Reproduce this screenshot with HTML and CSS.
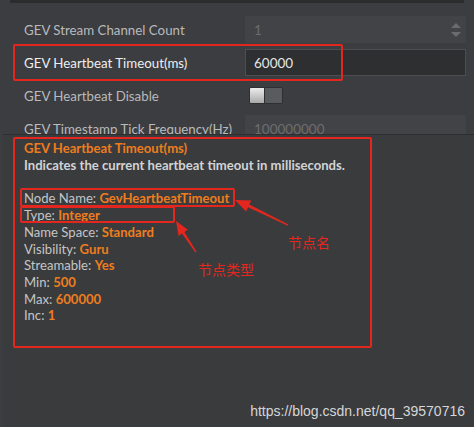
FILE: index.html
```html
<!DOCTYPE html>
<html>
<head>
<meta charset="utf-8">
<link rel="stylesheet" href="styles.css">
</head>
<body>
<div class="page">
  <div class="topbar"></div>
  <div class="props">
    <div class="row">
      <span class="label">GEV Stream Channel Count</span>
      <div class="field disabled"><span class="val">1</span>
        <span class="spin"><span class="up"></span><span class="down"></span></span>
      </div>
    </div>
    <div class="row">
      <span class="label strong">GEV Heartbeat Timeout(ms)</span>
      <div class="field active"><span class="val">60000</span></div>
    </div>
    <div class="row">
      <span class="label">GEV Heartbeat Disable</span>
      <div class="toggle"><span class="knob"></span><span class="track"></span></div>
    </div>
    <div class="row">
      <span class="label">GEV Timestamp Tick Frequency(Hz)</span>
      <div class="field disabled"><span class="val">100000000</span></div>
    </div>
  </div>

  <div class="mark mark-row"></div>

  <div class="tooltip">
    <div class="tip-title">GEV Heartbeat Timeout(ms)</div>
    <div class="tip-desc">Indicates the current heartbeat timeout in milliseconds.</div>
    <div class="tip-gap"></div>
    <div class="kv">Node Name: <b>GevHeartbeatTimeout</b></div>
    <div class="kv">Type: <b>Integer</b></div>
    <div class="kv">Name Space: <b>Standard</b></div>
    <div class="kv">Visibility: <b>Guru</b></div>
    <div class="kv">Streamable: <b>Yes</b></div>
    <div class="kv">Min: <b>500</b></div>
    <div class="kv">Max: <b>600000</b></div>
    <div class="kv">Inc: <b>1</b></div>

    <div class="mark mark-tip"></div>
    <div class="mark mark-node"></div>
    <div class="mark mark-type"></div>
    <span class="note note-name">节点名</span>
    <span class="note note-type">节点类型</span>
    <div class="watermark">https://blog.csdn.net/qq_39570716</div>
  </div>

  <svg class="arrows" width="474" height="427" viewBox="0 0 474 427">
    <polygon fill="#e3271f" points="235,200 251.2,200.6 249.3,204.6 288.4,224.4 287.8,225.8 248.1,207.3 246.1,211.4"/>
    <polygon fill="#e3271f" points="176,221 187.8,229.8 184.4,232 196.5,251.6 195.5,252.4 181.9,233.6 178.6,235.9"/>
  </svg>
</div>
</body>
</html>
```

FILE: styles.css
```css
html, body {
  margin: 0;
  padding: 0;
  background: #3c3d40;
}
.page {
  position: relative;
  width: 474px;
  height: 427px;
  overflow: hidden;
  background: #3c3d40;
  font-family: Lato, "Noto Sans", sans-serif;
}
.topbar {
  height: 3px;
  margin: 0 10px;
  background: #2b2c2e;
}
.props {
  display: flex;
  flex-direction: column;
  padding-top: 10px;
}
.row {
  display: flex;
  align-items: center;
  height: 33px;
  padding-left: 24px;
}
.label {
  width: 221px;
  flex: none;
  font-size: 13.3px;
  color: #b9babc;
  white-space: nowrap;
}
.label.strong {
  color: #eeeeee;
}
.field {
  width: 221px;
  height: 27px;
  box-sizing: border-box;
  display: flex;
  align-items: center;
  padding-left: 9px;
  font-size: 13.5px;
}
.field.disabled {
  background: #424346;
  color: #6c6d70;
}
.field.active {
  background: #2e2f31;
  border: 1px solid #4d4e51;
  padding-left: 8px;
  color: #e6e6e6;
}
.val {
  flex: 1;
}
.spin {
  display: flex;
  flex-direction: column;
  gap: 4px;
  margin-right: 5px;
}
.spin .up {
  width: 0; height: 0;
  border-left: 5px solid transparent;
  border-right: 5px solid transparent;
  border-bottom: 5px solid #6a6b6e;
}
.spin .down {
  width: 0; height: 0;
  border-left: 5px solid transparent;
  border-right: 5px solid transparent;
  border-top: 5px solid #6a6b6e;
}
.toggle {
  display: flex;
  margin-left: 4px;
  width: 34px;
  height: 17px;
  border-radius: 2px;
  overflow: hidden;
  background: #56575a;
  border: 1px solid #2e2f31;
  box-sizing: border-box;
}
.knob {
  width: 14px;
  background: linear-gradient(#ececec, #a9a9a9);
  border-right: 1px solid #2e2f31;
}
.track {
  flex: 1;
  background: #5a5b5e;
}

.mark {
  position: absolute;
  border: 2px solid #e3271f;
  border-radius: 2px;
  box-sizing: border-box;
}
.mark-row {
  left: 13px;
  top: 44px;
  width: 330px;
  height: 37px;
}

.tooltip {
  position: absolute;
  left: 3px;
  right: 0;
  top: 134px;
  bottom: 0;
  background: #3a3b3d;
  border-top: 1px solid #2d2e30;
  padding: 5px 0 0 21px;
  font-family: Lato, "Noto Sans", sans-serif;
  font-size: 13.1px;
  line-height: 16.7px;
  color: #c4c5c7;
}
.tip-title {
  color: #ee7d1e;
  font-weight: 700;
}
.tip-desc {
  color: #d2d3d5;
  font-weight: 700;
}
.tip-gap {
  height: 17px;
}
.kv b {
  color: #ee7d1e;
  font-weight: 700;
}
.mark-tip {
  left: 10px;
  top: 2px;
  width: 359px;
  height: 211px;
}
.mark-node {
  left: 17px;
  top: 53px;
  width: 215px;
  height: 19px;
}
.mark-type {
  left: 17px;
  top: 71px;
  width: 155px;
  height: 17px;
}
.note {
  position: absolute;
  font-family: "Noto Sans CJK SC", sans-serif;
  font-size: 14px;
  line-height: 16px;
  color: #e3271f;
}
.note-name {
  left: 285px;
  top: 99px;
}
.note-type {
  left: 195px;
  top: 126px;
}
.watermark {
  position: absolute;
  right: 9px;
  bottom: 8px;
  font-family: "Liberation Sans", Arial, sans-serif;
  font-size: 14px;
  line-height: 16px;
  color: #d6d6d6;
}
.arrows {
  position: absolute;
  left: 0;
  top: 0;
  pointer-events: none;
}
```
